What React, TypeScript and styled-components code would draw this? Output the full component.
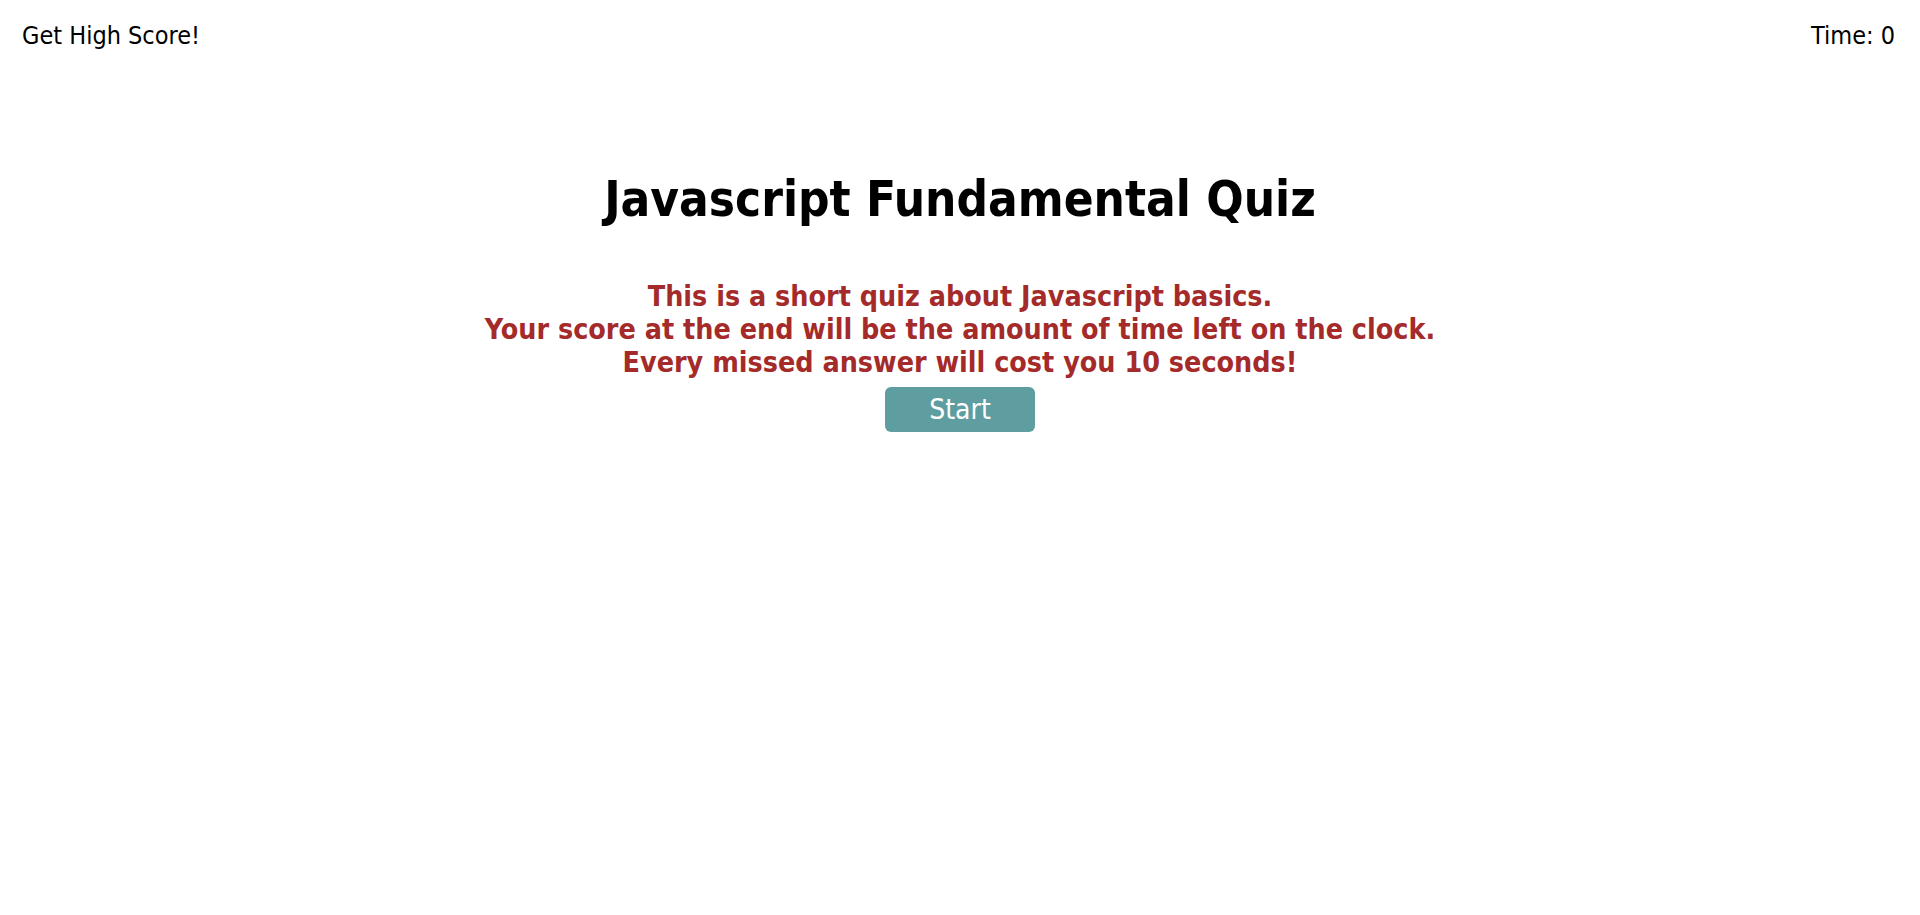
import React from "react";
import styled, { createGlobalStyle } from "styled-components";

const GlobalStyle = createGlobalStyle`
  html, body {
    margin: 0;
    padding: 0;
    background: #ffffff;
  }
  body {
    font-family: "DejaVu Sans Condensed", "DejaVu Sans", sans-serif;
    font-stretch: condensed;
    color: #000000;
  }
`;

const Page = styled.div`
  display: flex;
  flex-direction: column;
  min-height: 915px;
`;

const TopBar = styled.header`
  display: flex;
  justify-content: space-between;
  align-items: flex-start;
  padding: 22px 25px 0 22px;
`;

const TopText = styled.span`
  font-size: 25px;
  line-height: 28px;
  color: #000000;
`;

const Main = styled.main`
  display: flex;
  flex-direction: column;
  align-items: center;
  text-align: center;
`;

const Title = styled.h1`
  margin: 121px 0 0;
  font-size: 49px;
  line-height: 57px;
  font-weight: bold;
  color: #000000;
`;

const Intro = styled.p`
  margin: 52px 0 0;
  font-size: 28.4px;
  line-height: 33px;
  font-weight: bold;
  color: #a52a2a;
`;

const StartButton = styled.button`
  margin-top: 8px;
  width: 150px;
  height: 45px;
  border: none;
  border-radius: 6px;
  background: #5f9ea0;
  color: #ffffff;
  font-family: inherit;
  font-stretch: condensed;
  font-size: 28px;
  line-height: 32px;
  padding: 0;
  cursor: pointer;
`;

export default function App() {
  return (
    <>
      <GlobalStyle />
      <Page>
        <TopBar>
          <TopText>Get High Score!</TopText>
          <TopText>Time: 0</TopText>
        </TopBar>
        <Main>
          <Title>Javascript Fundamental Quiz</Title>
          <Intro>
            This is a short quiz about Javascript basics.
            <br />
            Your score at the end will be the amount of time left on the clock.
            <br />
            Every missed answer will cost you 10 seconds!
          </Intro>
          <StartButton>Start</StartButton>
        </Main>
      </Page>
    </>
  );
}
